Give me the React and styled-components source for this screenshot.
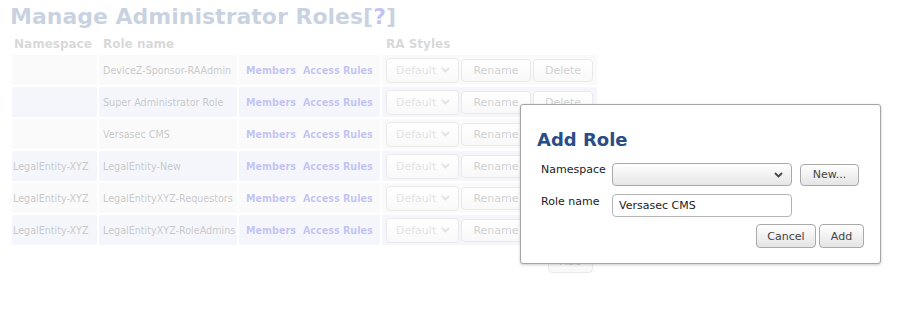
import React from 'react';
import styled, {createGlobalStyle} from "styled-components";

const GlobalStyle = createGlobalStyle`
  body {
    margin: 0;
    background: #fff;
    font-family: "DejaVu Sans", Verdana, sans-serif;
    color: #222;
  }
`;

const Page = styled.div`
  position: relative;
  height: 322px;
  padding: 0 10px;
  overflow: hidden;
`;

const Title = styled.h1`
  margin: 4px 0 4px;
  font-size: 22px;
  line-height: 26px;
  font-weight: bold;
  color: #2b4d85;
`;

const HelpLink = styled.a`
  color: #1010d0;
  text-decoration: none;
`;

const Table = styled.table`
  table-layout: fixed;
  border-spacing: 2px;
`;

const Th = styled.th`
  box-sizing: border-box;
  width: ${({$w}) => $w}px;
  padding: 1px 0 2px ${({$pl}) => $pl ?? 4}px;
  font-size: 12px;
  line-height: 14px;
  text-align: left;
  color: #666;
`;

const Row = styled.tr`
  background: ${({$alt}) => ($alt ? "#d6dbf0" : "#ececee")};
`;

const Td = styled.td`
  box-sizing: border-box;
  height: 30px;
  padding: 0 0 0 ${({$pl}) => $pl ?? 4}px;
  font-size: 9.6px;
  white-space: nowrap;
  vertical-align: middle;
  overflow: hidden;
`;

const FootTd = styled.td`
  padding: 3px 4px 0 0;
  text-align: right;
`;

const LinkCell = styled(Td)`
  padding-left: 7px;
`;

const TableLink = styled.a`
  font-weight: bold;
  color: #1010d0;
  text-decoration: none;
  margin-right: 7px;
`;

const Controls = styled.div`
  display: flex;
  gap: 2px;
  align-items: center;
`;

const Button = styled.button`
  box-sizing: border-box;
  width: ${({$w}) => $w}px;
  height: ${({$h}) => $h ?? 23}px;
  padding: 0;
  border: 1px solid #a9a9a9;
  border-radius: 4px;
  background: linear-gradient(#ffffff, #e4e4e4);
  font-family: "DejaVu Sans", Verdana, sans-serif;
  font-size: 11px;
  color: #444;
`;

const FakeSelect = styled.div`
  box-sizing: border-box;
  display: flex;
  align-items: center;
  justify-content: space-between;
  width: ${({$w}) => $w}px;
  height: ${({$h}) => $h}px;
  padding: 0 8px 0 9px;
  border: 1px solid #a9a9a9;
  border-radius: 4px;
  background: linear-gradient(#ffffff, #e6e6e6);
  font-size: 11px;
  color: ${({$muted}) => ($muted ? "#8c8c8c" : "#444")};
`;

const Overlay = styled.div`
  position: absolute;
  inset: 0;
  background: rgba(255, 255, 255, 0.75);
`;

const Dialog = styled.div`
  position: absolute;
  left: 520px;
  top: 104px;
  width: 361px;
  box-sizing: border-box;
  padding: 24px 16px 15px;
  background: #fff;
  border: 1px solid #a4a4a4;
  border-radius: 3px;
  box-shadow: 0 1px 3px rgba(0, 0, 0, 0.2);
`;

const DialogTitle = styled.h2`
  margin: 0;
  font-size: 18px;
  line-height: 22px;
  font-weight: bold;
  color: #2b4d85;
`;

const Form = styled.div`
  display: grid;
  grid-template-columns: 67px 180px 59px;
  column-gap: 8px;
  row-gap: 8px;
  margin-top: 11px;
  align-items: start;
`;

const Label = styled.label`
  padding: 1px 0 0 4px;
  font-size: 11px;
  line-height: 13px;
  color: #222;
  white-space: nowrap;
`;

const Field = styled.div`
  margin-top: ${({$mt}) => $mt ?? 0}px;
`;

const Input = styled.input`
  box-sizing: border-box;
  width: 180px;
  height: 23px;
  padding: 0 6px;
  border: 1px solid #b4b4b4;
  border-radius: 4px;
  font-family: "DejaVu Sans", Verdana, sans-serif;
  font-size: 11px;
  color: #222;
  outline: none;
`;

const Actions = styled.div`
  display: flex;
  justify-content: flex-end;
  gap: 3px;
  margin-top: 7px;
`;

const Chevron = () => (
  <svg width="9" height="6" viewBox="0 0 9 6">
    <polyline points="1,1 4.5,4.5 8,1" fill="none" stroke="currentColor" strokeWidth="1.8" />
  </svg>
);

const roles = [
  {ns: "", name: "DeviceZ-Sponsor-RAAdmin"},
  {ns: "", name: "Super Administrator Role"},
  {ns: "", name: "Versasec CMS"},
  {ns: "LegalEntity-XYZ", name: "LegalEntity-New"},
  {ns: "LegalEntity-XYZ", name: "LegalEntityXYZ-Requestors"},
  {ns: "LegalEntity-XYZ", name: "LegalEntityXYZ-RoleAdmins"},
];

const App = () => {
  return (
    <Page>
      <GlobalStyle/>
      <Title>Manage Administrator Roles[<HelpLink href="#">?</HelpLink>]</Title>
      <Table>
        <thead>
          <tr>
            <Th $w={85} $pl={2}>Namespace</Th>
            <Th $w={138}>Role name</Th>
            <Th $w={141}></Th>
            <Th $w={215}>RA Styles</Th>
          </tr>
        </thead>
        <tbody>
          {roles.map((r, i) => (
            <Row key={r.name} $alt={i % 2 === 1}>
              <Td $pl={1}>{r.ns}</Td>
              <Td>{r.name}</Td>
              <LinkCell>
                <TableLink href="#">Members</TableLink>
                <TableLink href="#">Access Rules</TableLink>
              </LinkCell>
              <Td>
                <Controls>
                  <FakeSelect $w={73} $h={25} $muted>Default <Chevron/></FakeSelect>
                  <Button $w={70}>Rename</Button>
                  <Button $w={60}>Delete</Button>
                </Controls>
              </Td>
            </Row>
          ))}
          <tr>
            <td colSpan={3}></td>
            <FootTd><Button $w={45} $h={22}>Add</Button></FootTd>
          </tr>
        </tbody>
      </Table>
      <Overlay/>
      <Dialog>
        <DialogTitle>Add Role</DialogTitle>
        <Form>
          <Label>Namespace</Label>
          <Field $mt={1}><FakeSelect $w={180} $h={23}><span></span><Chevron/></FakeSelect></Field>
          <Field $mt={1}><Button $w={59} $h={22}>New...</Button></Field>
          <Label>Role name</Label>
          <Field><Input defaultValue="Versasec CMS"/></Field>
          <span></span>
        </Form>
        <Actions>
          <Button $w={60} $h={24}>Cancel</Button>
          <Button $w={45} $h={24}>Add</Button>
        </Actions>
      </Dialog>
    </Page>
  );
};

export default App;
